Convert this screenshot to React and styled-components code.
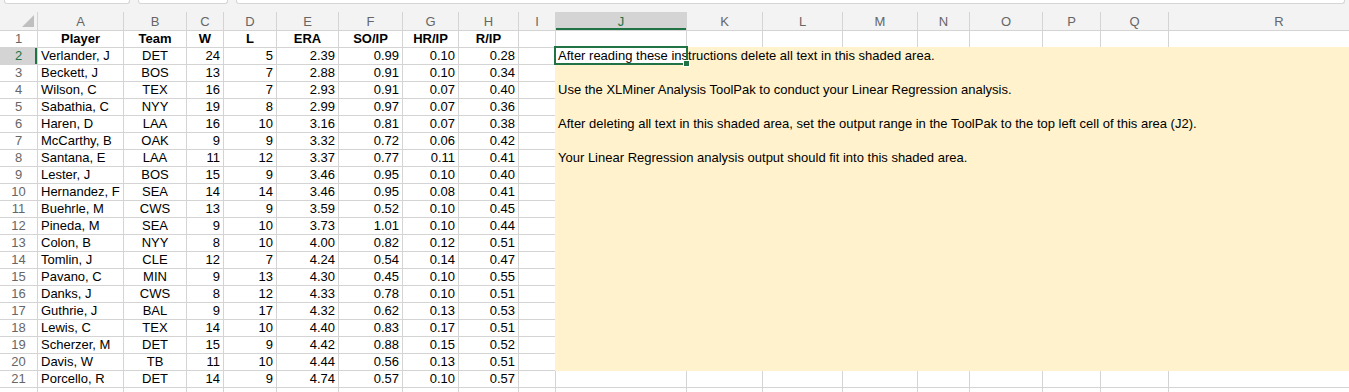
import React from "react";
import styled, { createGlobalStyle } from "styled-components";

const GlobalStyle = createGlobalStyle`
  html, body {
    margin: 0;
    padding: 0;
    overflow: hidden;
    background: #f3f3f3;
  }
  body {
    font-family: "Liberation Sans", Arial, sans-serif;
  }
`;

const GREEN = "#217346";
const LINE = "#d4d4d4";

// widths of row header + A..R (gap of 1px between them draws the grid lines)
const colWidths = [37, 85, 62, 36, 52, 61, 63, 55, 59, 36, 130, 75, 79, 74, 51, 72, 57, 67, 220];
const letters = ["A", "B", "C", "D", "E", "F", "G", "H", "I", "J", "K", "L", "M", "N", "O", "P", "Q", "R"];

const header = ["Player", "Team", "W", "L", "ERA", "SO/IP", "HR/IP", "R/IP"];
const rows = [
    ["Verlander, J", "DET", "24", "5", "2.39", "0.99", "0.10", "0.28"],
    ["Beckett, J", "BOS", "13", "7", "2.88", "0.91", "0.10", "0.34"],
    ["Wilson, C", "TEX", "16", "7", "2.93", "0.91", "0.07", "0.40"],
    ["Sabathia, C", "NYY", "19", "8", "2.99", "0.97", "0.07", "0.36"],
    ["Haren, D", "LAA", "16", "10", "3.16", "0.81", "0.07", "0.38"],
    ["McCarthy, B", "OAK", "9", "9", "3.32", "0.72", "0.06", "0.42"],
    ["Santana, E", "LAA", "11", "12", "3.37", "0.77", "0.11", "0.41"],
    ["Lester, J", "BOS", "15", "9", "3.46", "0.95", "0.10", "0.40"],
    ["Hernandez, F", "SEA", "14", "14", "3.46", "0.95", "0.08", "0.41"],
    ["Buehrle, M", "CWS", "13", "9", "3.59", "0.52", "0.10", "0.45"],
    ["Pineda, M", "SEA", "9", "10", "3.73", "1.01", "0.10", "0.44"],
    ["Colon, B", "NYY", "8", "10", "4.00", "0.82", "0.12", "0.51"],
    ["Tomlin, J", "CLE", "12", "7", "4.24", "0.54", "0.14", "0.47"],
    ["Pavano, C", "MIN", "9", "13", "4.30", "0.45", "0.10", "0.55"],
    ["Danks, J", "CWS", "8", "12", "4.33", "0.78", "0.10", "0.51"],
    ["Guthrie, J", "BAL", "9", "17", "4.32", "0.62", "0.13", "0.53"],
    ["Lewis, C", "TEX", "14", "10", "4.40", "0.83", "0.17", "0.51"],
    ["Scherzer, M", "DET", "15", "9", "4.42", "0.88", "0.15", "0.52"],
    ["Davis, W", "TB", "11", "10", "4.44", "0.56", "0.13", "0.51"],
    ["Porcello, R", "DET", "14", "9", "4.74", "0.57", "0.10", "0.57"],
];

const notes = [
    "After reading these instructions delete all text in this shaded area.",
    "",
    "Use the XLMiner Analysis ToolPak to conduct your Linear Regression analysis.",
    "",
    "After deleting all text in this shaded area, set the output range in the ToolPak to the top left cell of this area (J2).",
    "",
    "Your Linear Regression analysis output should fit into this shaded area.",
];

const Toolbar = styled.div`
  display: flex;
  gap: 8px;
  height: 12px;
  padding-left: 4px;
  box-sizing: border-box;
`;

const ToolBox = styled.div`
  height: 3px;
  width: ${p => p.$w ? p.$w + "px" : "auto"};
  flex: ${p => p.$w ? "none" : "1"};
  margin-right: ${p => p.$w ? "0" : "4px"};
  background: #fff;
  border: 1px solid #d6d6d6;
  border-top: none;
  border-radius: 0 0 3px 3px;
`;

const Sheet = styled.div`
  display: grid;
  grid-template-columns: ${colWidths.map(w => w + "px").join(" ")};
  grid-template-rows: 18px repeat(22, 16px);
  gap: 1px;
  background: ${LINE};
  width: max-content;
  font-size: 13px;
  line-height: 16px;
  color: #000;
`;

const Corner = styled.div`
  background: #f3f3f3;
  display: flex;
  align-items: flex-end;
  justify-content: flex-end;
  padding: 0 3px 3px 0;
`;

const ColHead = styled.div`
  background: ${p => p.$active ? "#d4d4d4" : "#f3f3f3"};
  box-shadow: ${p => p.$active ? `inset 0 -2px 0 ${GREEN}` : "none"};
  color: ${p => p.$active ? GREEN : "#666"};
  font-size: 13px;
  line-height: 18px;
  text-align: center;
  padding-top: 1px;
`;

const RowHead = styled.div`
  background: ${p => p.$active ? "#d4d4d4" : "#fff"};
  box-shadow: ${p => p.$active ? `inset -2px 0 0 ${GREEN}` : "none"};
  color: ${p => p.$active ? GREEN : "#666"};
  text-align: center;
  font-size: 13px;
`;

const Cell = styled.div`
  background: #fff;
  white-space: nowrap;
  overflow: hidden;
  text-align: ${p => p.$align || "left"};
  font-weight: ${p => p.$bold ? "bold" : "normal"};
  padding: 0 3px;
`;

const Shaded = styled.div`
  grid-column: 11 / -1;
  grid-row: 3 / 22;
  margin: -1px 0 -1px -1px;
  padding-top: 1px;
  background: #fff2cc;
  position: relative;
  display: flex;
  flex-direction: column;
`;

const Note = styled.div`
  height: 17px;
  line-height: 16px;
  padding-left: 3px;
  white-space: nowrap;
  background: ${p => p.$active ? "linear-gradient(90deg, #fff 132px, transparent 132px)" : "none"};
`;

const ActiveBox = styled.div`
  position: absolute;
  left: -1px;
  top: -1px;
  width: 134px;
  height: 19px;
  box-sizing: border-box;
  border: 2px solid ${GREEN};
  pointer-events: none;
`;

const FillHandle = styled.div`
  position: absolute;
  right: -4px;
  bottom: -4px;
  width: 5px;
  height: 5px;
  background: ${GREEN};
  border: 1px solid #fff;
`;

const aligns = ["left", "center", "right", "right", "right", "right", "right", "right"];

function App() {
    return (
        <>
            <GlobalStyle />
            <Toolbar>
                <ToolBox $w={124} />
                <ToolBox $w={88} />
                <ToolBox />
            </Toolbar>
            <Sheet>
                <Corner>
                    <svg width="12" height="12" viewBox="0 0 12 12">
                        <polygon points="12,0 12,12 0,12" fill="#bfbfbf" />
                    </svg>
                </Corner>
                {letters.map(l => <ColHead key={l} $active={l === "J"}>{l}</ColHead>)}

                <RowHead>1</RowHead>
                {header.map(h => <Cell key={h} $align="center" $bold>{h}</Cell>)}
                {letters.slice(8).map(l => <Cell key={"h" + l} />)}

                <Shaded>
                    {notes.map((n, i) => <Note key={i} $active={i === 0}>{n}</Note>)}
                    <ActiveBox>
                        <FillHandle />
                    </ActiveBox>
                </Shaded>

                {rows.map((r, i) => (
                    <React.Fragment key={r[0]}>
                        <RowHead $active={i === 0}>{i + 2}</RowHead>
                        {r.map((v, j) => <Cell key={j} $align={aligns[j]}>{v}</Cell>)}
                        <Cell />
                        {i === rows.length - 1 && letters.slice(9).map(l => <Cell key={"t" + l} />)}
                    </React.Fragment>
                ))}

                {/* row 22 is cut off by the window, only its top edge shows */}
                <RowHead />
                {letters.map(l => <Cell key={"z" + l} />)}
            </Sheet>
        </>
    );
}

export default App;
